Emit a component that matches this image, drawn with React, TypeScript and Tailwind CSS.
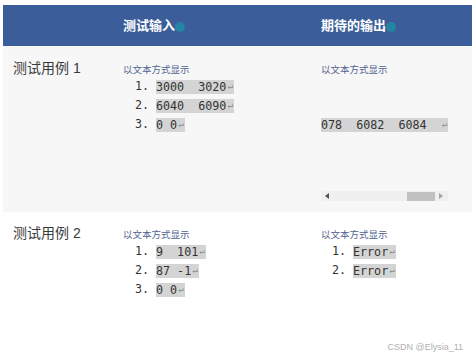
import React from "react";

const sans = { fontFamily: '"Liberation Sans", "Noto Sans CJK SC", sans-serif' };

function Ret() {
  return <span className="text-[9px] text-[#8a8a8a] inline-block w-[8px] text-center align-middle leading-none">↵</span>;
}

function Line({ n, text }: { n?: string; text: string }) {
  return (
    <div className="h-[19px] flex items-center whitespace-pre text-[#333]">
      {n !== undefined && <span className="w-[21px]">{n}</span>}
      <span className="bg-[#d4d4d4] h-[14px] leading-[14px] flex items-center">
        {text}
        <Ret />
      </span>
    </div>
  );
}

function Label() {
  return <div className="text-[9.5px] leading-[14px] h-[14px] text-[#50628f]">以文本方式显示</div>;
}

const mono = "font-['DejaVu_Sans_Mono',monospace] text-[11.7px]";

export default function App() {
  return (
    <div className="relative w-[474px] h-[358px] bg-white overflow-hidden" style={sans}>
      <div className="pt-[5px] ml-[3px] mr-[2px]">
        {/* header */}
        <div className="grid grid-cols-[120px_198px_1fr] h-[41px] bg-[#3b5e9a] items-center text-white font-bold text-[13px]">
          <div />
          <div className="flex items-center">
            <span>测试输入</span>
            <span className="w-[10px] h-[10px] rounded-full bg-[#2384a3] mt-[2px]" />
          </div>
          <div className="flex items-center">
            <span>期待的输出</span>
            <span className="w-[10px] h-[10px] rounded-full bg-[#2384a3] mt-[2px]" />
          </div>
        </div>

        {/* row 1 */}
        <div className="grid grid-cols-[120px_198px_1fr] h-[166px] bg-[#f7f7f7]">
          <div className="pl-[10px] pt-[12px] text-[14px] leading-[20px] text-[#3a3a3a]">测试用例 1</div>
          <div className="pt-[17px]">
            <Label />
            <div className={`${mono} pl-[12px]`}>
              <Line n="1." text="3000  3020" />
              <Line n="2." text="6040  6090" />
              <Line n="3." text="0 0" />
            </div>
          </div>
          <div className="pt-[17px]">
            <Label />
            <div className={`${mono} w-[127px] overflow-hidden`}>
              <div className="h-[38px]" />
              <Line text="078  6082  6084  " />
              <div className="h-[57px]" />
              <div className="h-[10px] bg-[#f0f0f0] flex items-center relative">
                <span className="ml-[4px] w-0 h-0 border-y-[3px] border-y-transparent border-r-[4px] border-r-[#505050]" />
                <span className="absolute left-[86px] top-[1px] w-[28px] h-[9px] bg-[#c1c1c1]" />
                <span className="ml-auto mr-[5px] w-0 h-0 border-y-[3px] border-y-transparent border-l-[4px] border-l-[#a3a3a3]" />
              </div>
            </div>
          </div>
        </div>

        {/* row 2 */}
        <div className="grid grid-cols-[120px_198px_1fr] h-[141px]">
          <div className="pl-[10px] pt-[11px] text-[14px] leading-[20px] text-[#3a3a3a]">测试用例 2</div>
          <div className="pt-[16px]">
            <Label />
            <div className={`${mono} pl-[12px]`}>
              <Line n="1." text="9  101" />
              <Line n="2." text="87 -1" />
              <Line n="3." text="0 0" />
            </div>
          </div>
          <div className="pt-[16px]">
            <Label />
            <div className={`${mono} pl-[11px]`}>
              <Line n="1." text="Error" />
              <Line n="2." text="Error" />
            </div>
          </div>
        </div>
      </div>
      <div className="absolute right-[11px] bottom-[4px] text-[9px] text-[#b0b0b0]">CSDN @Elysia_11</div>
    </div>
  );
}
